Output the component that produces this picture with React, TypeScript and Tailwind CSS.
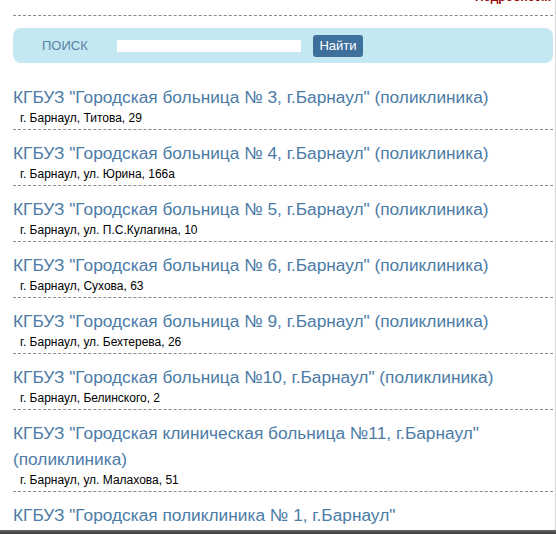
import React from 'react'

type Clinic = {
  name: string
  address: string
}

const clinics: Clinic[] = [
  { name: 'КГБУЗ "Городская больница № 3, г.Барнаул" (поликлиника)', address: 'г. Барнаул, Титова, 29' },
  { name: 'КГБУЗ "Городская больница № 4, г.Барнаул" (поликлиника)', address: 'г. Барнаул, ул. Юрина, 166а' },
  { name: 'КГБУЗ "Городская больница № 5, г.Барнаул" (поликлиника)', address: 'г. Барнаул, ул. П.С.Кулагина, 10' },
  { name: 'КГБУЗ "Городская больница № 6, г.Барнаул" (поликлиника)', address: 'г. Барнаул, Сухова, 63' },
  { name: 'КГБУЗ "Городская больница № 9, г.Барнаул" (поликлиника)', address: 'г. Барнаул, ул. Бехтерева, 26' },
  { name: 'КГБУЗ "Городская больница №10, г.Барнаул" (поликлиника)', address: 'г. Барнаул, Белинского, 2' },
  { name: 'КГБУЗ "Городская клиническая больница №11, г.Барнаул" (поликлиника)', address: 'г. Барнаул, ул. Малахова, 51' },
  { name: 'КГБУЗ "Городская поликлиника № 1, г.Барнаул"', address: 'г. Барнаул, ул. Попова, 43' },
]

function SearchBar() {
  return (
    <div className="mt-[12px] h-[35px] rounded-[8px] bg-[#c3e8f1] flex items-center pl-[29px]">
      <span className="w-[75px] text-[13px] text-[#5a83a6] leading-none">ПОИСК</span>
      <input
        type="text"
        className="w-[184px] h-[12px] bg-white border-0 outline-none"
      />
      <button className="ml-[12px] h-[22px] w-[50px] rounded-[3px] bg-[#3f6f9b] text-white text-[13px] leading-none">
        Найти
      </button>
    </div>
  )
}

function ClinicItem({ clinic }: { clinic: Clinic }) {
  return (
    <div className="pt-[10px] pb-[3px] border-b border-dashed border-[#8a8a8a]">
      <a href="#" className="block text-[17.3px] leading-[26px] text-[#4b7ba6] pr-[40px]">
        {clinic.name}
      </a>
      <div className="pl-[7px] text-[12px] leading-[16px] text-black">{clinic.address}</div>
    </div>
  )
}

export default function App() {
  return (
    <div
      className="relative h-[534px] w-[556px] overflow-hidden bg-white"
      style={{ fontFamily: '"Liberation Sans", Arial, sans-serif' }}
    >
      <div className="pl-[13px] pr-[3px]">
        <div className="h-[16px] flex justify-end overflow-hidden border-b border-dashed border-[#8a8a8a]">
          <span className="mt-[-10px] pr-[2px] text-[12px] leading-[14px] font-bold text-[#9a0c0c]">
            Подробнее...
          </span>
        </div>
        <SearchBar />
        <div className="mt-[11px]">
          {clinics.map((c) => (
            <ClinicItem key={c.name} clinic={c} />
          ))}
        </div>
      </div>
      <div className="absolute right-0 top-0 bottom-0 w-px bg-[#d8d8d8]" />
      <div className="absolute left-0 right-0 bottom-0 h-[4px] bg-gradient-to-b from-[#6a6a6a] to-[#3a3a3a]" />
    </div>
  )
}
